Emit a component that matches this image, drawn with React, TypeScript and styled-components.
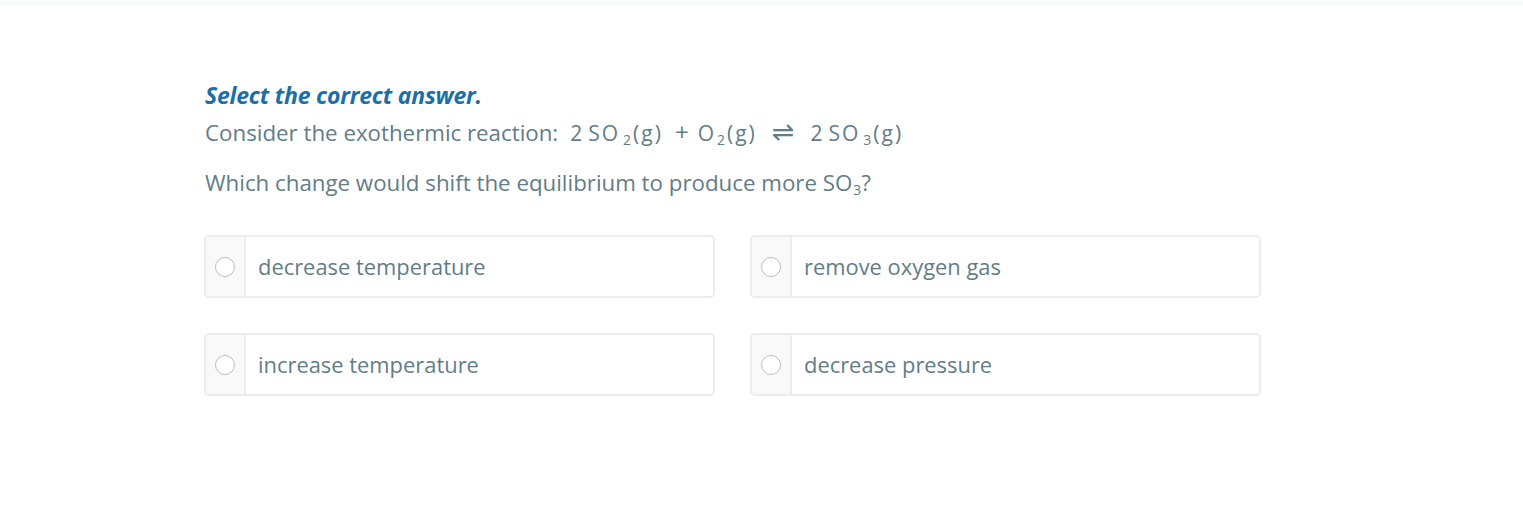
import React from "react";
import styled, { createGlobalStyle } from "styled-components";

const GlobalStyle = createGlobalStyle`
  html, body {
    margin: 0;
    padding: 0;
    background: #ffffff;
  }
  body {
    font-family: "Open Sans", Lato, "Liberation Sans", sans-serif;
  }
`;

const TopStrip = styled.div`
  height: 5px;
  background: #f8fbfb;
`;

const Page = styled.main`
  padding: 74px 0 0 204px;
`;

const Question = styled.section`
  width: 1058px;
`;

const Prompt = styled.h2`
  margin: 0 0 6px 1px;
  font-size: 23px;
  font-weight: 700;
  font-style: italic;
  color: #1b6ea8;
  line-height: 32px;
  letter-spacing: -0.2px;
`;

const Stem = styled.p<{ $gap?: number }>`
  margin: 0 0 ${(p) => p.$gap ?? 0}px 1px;
  font-size: 22.3px;
  color: #627d87;
  line-height: 32px;
`;

const Equation = styled.span`
  margin-left: 12px;
  font-family: "Open Sans", sans-serif;
  font-size: 21px;
  letter-spacing: 2px;
`;

const Coef = styled.span`
  margin-right: 4px;
`;

const Op = styled.span<{ $arrow?: boolean }>`
  display: inline-block;
  line-height: 0;
  font-size: ${(p) => (p.$arrow ? 27 : 24)}px;
  font-family: ${(p) => (p.$arrow ? '"DejaVu Sans", sans-serif' : "inherit")};
  letter-spacing: 0;
  margin: ${(p) => (p.$arrow ? "0 16px 0 15px" : "0 9px 0 12px")};
`;

const Sub = styled.sub<{ $gap?: number }>`
  font-size: 14px;
  vertical-align: -4px;
  line-height: 0;
  margin-left: ${(p) => p.$gap ?? 1}px;
`;

const Grid = styled.div`
  display: grid;
  grid-template-columns: 511px 511px;
  column-gap: 35px;
  row-gap: 35px;
  margin-top: 36px;
`;

const Choice = styled.label`
  display: flex;
  height: 63px;
  box-sizing: border-box;
  border: 2px solid #ececec;
  border-radius: 5px;
  background: #fff;
  cursor: pointer;
  overflow: hidden;
`;

const RadioCell = styled.div`
  width: 38px;
  flex: none;
  display: flex;
  align-items: center;
  justify-content: center;
  background: #f9f9f9;
  border-right: 2px solid #ececec;
`;

const Radio = styled.span`
  width: 18px;
  height: 18px;
  border-radius: 50%;
  border: 1px solid #bdbdbd;
  background: #fff;
`;

const ChoiceText = styled.span`
  display: flex;
  align-items: center;
  padding-left: 12px;
  font-size: 21.9px;
  color: #627d87;
`;

const options = [
  "decrease temperature",
  "remove oxygen gas",
  "increase temperature",
  "decrease pressure",
];

export default function App() {
  return (
    <>
      <GlobalStyle />
      <TopStrip />
      <Page>
        <Question>
          <Prompt>Select the correct answer.</Prompt>
          <Stem $gap={18}>
            Consider the exothermic reaction:
            <Equation>
              <Coef>2</Coef>SO<Sub $gap={3}>2</Sub>(g)<Op>+</Op>O<Sub>2</Sub>(g)
              <Op $arrow>⇌</Op>
              <Coef>2</Coef>SO<Sub $gap={3}>3</Sub>(g)
            </Equation>
          </Stem>
          <Stem>
            Which change would shift the equilibrium to produce more SO<Sub>3</Sub>?
          </Stem>
          <Grid>
            {options.map((o) => (
              <Choice key={o}>
                <RadioCell>
                  <Radio />
                </RadioCell>
                <ChoiceText>{o}</ChoiceText>
              </Choice>
            ))}
          </Grid>
        </Question>
      </Page>
    </>
  );
}
